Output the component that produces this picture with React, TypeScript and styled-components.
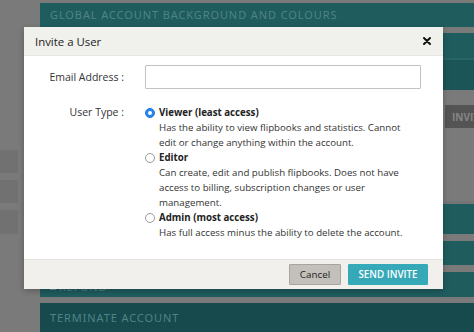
import React from "react";
import styled, { createGlobalStyle } from "styled-components";

const Global = createGlobalStyle`
  html, body { margin: 0; padding: 0; }
  body {
    width: 474px;
    height: 332px;
    overflow: hidden;
    background: #7a7a7a;
    font-family: "Open Sans", "Noto Sans", sans-serif;
  }
`;

const Page = styled.div`
  position: relative;
  display: flex;
  width: 474px;
  height: 332px;
  overflow: hidden;
  background: #7a7a7a;
`;

const Sidebar = styled.div`
  width: 40px;
  flex: none;
  display: flex;
  flex-direction: column;
  gap: 7px;
  padding-top: 150px;
  box-sizing: border-box;
`;

const SideBlock = styled.div<{ $h: number }>`
  width: 18px;
  height: ${(p) => p.$h}px;
  background: #717171;
`;

const Main = styled.div`
  flex: none;
  width: 520px;
  display: flex;
  flex-direction: column;
  padding-top: 3px;
`;

const Bar = styled.div<{ $h: number; $top?: number; $pad?: number; $tone?: "mid" | "deep" }>`
  height: ${(p) => p.$h}px;
  margin-top: ${(p) => p.$top ?? 0}px;
  padding-top: ${(p) => p.$pad ?? 0}px;
  background: ${(p) =>
    p.$tone === "deep" ? "#174a4d" : p.$tone === "mid" ? "#1c5557" : "#1f5c5e"};
  display: flex;
  align-items: center;
  padding-left: 10px;
  gap: 3px;
  box-sizing: border-box;
  font-family: "Noto Sans", "Open Sans", sans-serif;
  font-size: 11px;
  letter-spacing: 0.9px;
  color: #4e8486;
  text-transform: uppercase;
`;

const Line = styled.div<{ $h: number; $c: string }>`
  height: ${(p) => p.$h}px;
  background: ${(p) => p.$c};
`;

const GrayArea = styled.div`
  height: 113px;
  padding: 15px 0 0 405px;
  box-sizing: border-box;
`;

const DarkButton = styled.div`
  width: 80px;
  height: 23px;
  background: #545454;
  color: #858585;
  font-family: "Open Sans", sans-serif;
  font-weight: 700;
  font-size: 10px;
  display: flex;
  align-items: center;
  padding-left: 7px;
  box-sizing: border-box;
`;

const Check = styled.span`
  width: 6px;
  height: 7px;
  background: #6a8e90;
  display: inline-block;
`;

const Modal = styled.div`
  position: absolute;
  left: 24px;
  top: 27px;
  width: 419px;
  height: 262px;
  background: #ffffff;
  display: flex;
  flex-direction: column;
  box-shadow: 0 2px 6px rgba(0, 0, 0, 0.25);
  color: #222;
`;

const Header = styled.div`
  height: 29px;
  flex: none;
  background: #f0f0ec;
  border-bottom: 1px solid #e6e6e2;
  box-sizing: border-box;
  display: flex;
  align-items: center;
  justify-content: space-between;
  padding: 0 11px 0 11px;
`;

const Title = styled.div`
  font-size: 11.4px;
  color: #222;
  padding-top: 1px;
`;

const Close = styled.button`
  border: none;
  background: none;
  padding: 0;
  width: 10px;
  height: 10px;
  display: flex;
  cursor: pointer;
`;

const Body = styled.div`
  flex: 1;
  padding-top: 9px;
  display: flex;
  flex-direction: column;
  gap: 16px;
`;

const Row = styled.div<{ $align: string }>`
  display: grid;
  grid-template-columns: 100px 276px;
  column-gap: 21px;
  align-items: ${(p) => p.$align};
`;

const Label = styled.div`
  text-align: right;
  font-size: 10.5px;
  color: #333;
  line-height: 15px;
  white-space: nowrap;
`;

const Input = styled.input`
  height: 24px;
  width: 276px;
  box-sizing: border-box;
  border: 1px solid #c2c2c2;
  border-radius: 1px;
  outline: none;
  margin: 0;
`;

const Options = styled.div`
  display: flex;
  flex-direction: column;
  width: 300px;
`;

const Option = styled.div`
  display: grid;
  grid-template-columns: 10px 1fr;
  column-gap: 4px;
  line-height: 15px;
  font-size: 9.7px;
  color: #333;
  white-space: nowrap;
`;

const Radio = styled.span<{ $on?: boolean }>`
  width: 10px;
  height: 10px;
  margin-top: 2.5px;
  border-radius: 50%;
  box-sizing: border-box;
  display: flex;
  align-items: center;
  justify-content: center;
  background: ${(p) => (p.$on ? "#2486f2" : "#fff")};
  border: 1px solid ${(p) => (p.$on ? "#1f78de" : "#9b9b9b")};
  &::after {
    content: "";
    width: 4px;
    height: 4px;
    border-radius: 50%;
    background: #fff;
    display: ${(p) => (p.$on ? "block" : "none")};
  }
`;

const OptTitle = styled.div`
  font-weight: 700;
  color: #222;
`;

const Footer = styled.div`
  height: 30px;
  flex: none;
  background: #f1f0ec;
  border-top: 1px solid #e4e3df;
  box-sizing: border-box;
  display: flex;
  justify-content: flex-end;
  align-items: center;
  gap: 7px;
  padding: 0 15px 1px 0;
`;

const Btn = styled.button<{ $primary?: boolean }>`
  height: 21px;
  width: ${(p) => (p.$primary ? 80 : 52)}px;
  margin: 0;
  padding: 0;
  box-sizing: border-box;
  font-family: "Open Sans", sans-serif;
  font-size: 9.8px;
  font-weight: ${(p) => (p.$primary ? 600 : 400)};
  color: ${(p) => (p.$primary ? "#ffffff" : "#222")};
  background: ${(p) => (p.$primary ? "#36a9b9" : "#c3c0bb")};
  border: 1px solid ${(p) => (p.$primary ? "#36a9b9" : "#a7a49f")};
  border-radius: 1px;
`;

const options = [
  {
    title: "Viewer (least access)",
    desc: ["Has the ability to view flipbooks and statistics. Cannot", "edit or change anything within the account."],
    on: true,
  },
  {
    title: "Editor",
    desc: [
      "Can create, edit and publish flipbooks. Does not have",
      "access to billing, subscription changes or user",
      "management.",
    ],
  },
  {
    title: "Admin (most access)",
    desc: ["Has full access minus the ability to delete the account."],
  },
];

export default function App() {
  return (
    <>
      <Global />
      <Page>
        <Sidebar>
          <SideBlock $h={23} />
          <SideBlock $h={23} />
          <SideBlock $h={24} />
        </Sidebar>
        <Main>
          <Bar $h={24}>Global Account Background and Colours</Bar>
          <Bar $h={26} $top={6} />
          <Line $h={2} $c="#2a6466" />
          <Bar $h={31} $tone="mid" />
          <GrayArea>
            <DarkButton>INVITE USER</DarkButton>
          </GrayArea>
          <Line $h={3} $c="#757575" />
          <Bar $h={30} />
          <Bar $h={25} $top={7} />
          <Bar $h={25} $top={7} $pad={5}>
            <Check />
            Refund
          </Bar>
          <Bar $h={30} $top={6} $tone="deep">Terminate Account</Bar>
        </Main>
        <Modal>
          <Header>
            <Title>Invite a User</Title>
            <Close aria-label="Close">
              <svg width="10" height="10" viewBox="0 0 10 10">
                <path d="M2 2 L8 8 M8 2 L2 8" stroke="#111" strokeWidth="2" strokeLinecap="round" />
              </svg>
            </Close>
          </Header>
          <Body>
            <Row $align="center">
              <Label>Email Address :</Label>
              <Input type="text" />
            </Row>
            <Row $align="start">
              <Label>User Type :</Label>
              <Options>
                {options.map((o) => (
                  <Option key={o.title}>
                    <Radio $on={o.on} />
                    <OptTitle>{o.title}</OptTitle>
                    {o.desc.map((d) => (
                      <React.Fragment key={d}>
                        <span />
                        <div>{d}</div>
                      </React.Fragment>
                    ))}
                  </Option>
                ))}
              </Options>
            </Row>
          </Body>
          <Footer>
            <Btn>Cancel</Btn>
            <Btn $primary>SEND INVITE</Btn>
          </Footer>
        </Modal>
      </Page>
    </>
  );
}
